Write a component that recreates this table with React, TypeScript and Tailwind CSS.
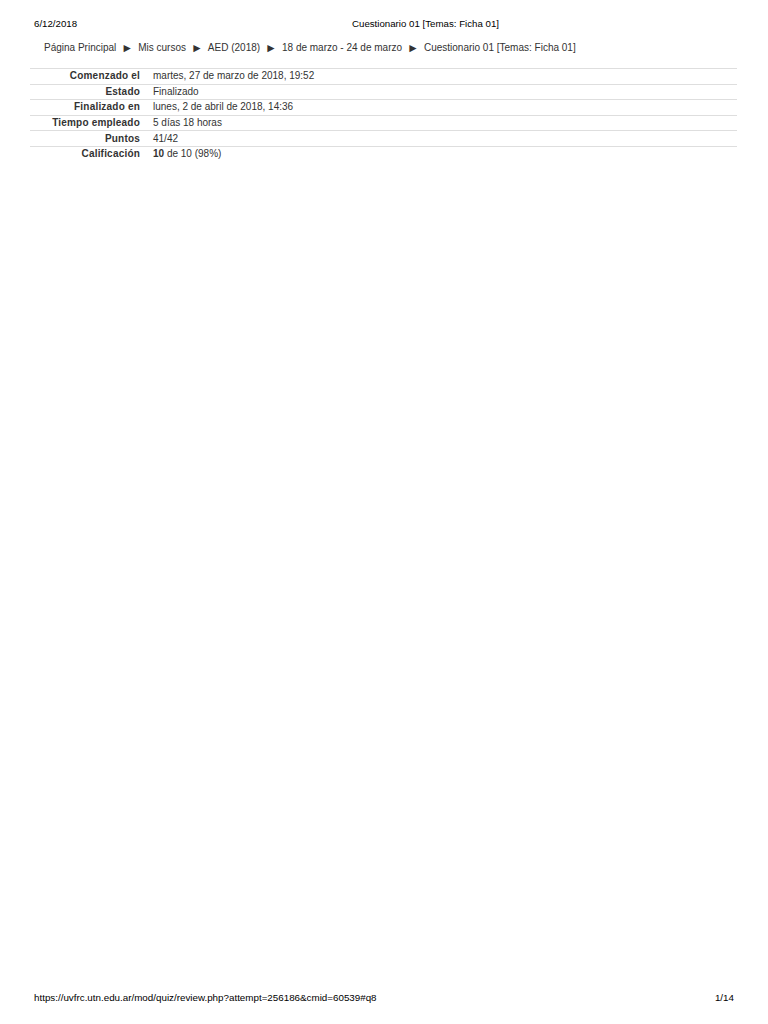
import React from "react";

const rows: { label: string; value: React.ReactNode }[] = [
  { label: "Comenzado el", value: "martes, 27 de marzo de 2018, 19:52" },
  { label: "Estado", value: "Finalizado" },
  { label: "Finalizado en", value: "lunes, 2 de abril de 2018, 14:36" },
  { label: "Tiempo empleado", value: "5 días 18 horas" },
  { label: "Puntos", value: "41/42" },
  {
    label: "Calificación",
    value: (
      <>
        <b className="font-bold">10</b> de 10 (98%)
      </>
    ),
  },
];

const crumbs = [
  "Página Principal",
  "Mis cursos",
  "AED (2018)",
  "18 de marzo - 24 de marzo",
  "Cuestionario 01 [Temas: Ficha 01]",
];

export default function App() {
  return (
    <div
      className="w-[768px] h-[1024px] bg-white flex flex-col text-[#222]"
      style={{ fontFamily: '"Liberation Sans", Arial, sans-serif' }}
    >
      <div className="flex pt-[18px] pl-[34px] text-[9.7px] leading-[12px] text-black">
        <div className="w-[318px]">6/12/2018</div>
        <div>Cuestionario 01 [Temas: Ficha 01]</div>
      </div>
      <div className="flex items-center pl-[44px] mt-[12px] text-[10px] leading-[12px] text-[#333]">
        {crumbs.map((c, i) => (
          <React.Fragment key={c}>
            {i > 0 && (
              <span className="mx-[5px] text-[12px] leading-[12px]">►</span>
            )}
            <span>{c}</span>
          </React.Fragment>
        ))}
      </div>
      <div className="ml-[30px] w-[707px] mt-[14px]">
        {rows.map((r, i) => (
          <div
            key={r.label}
            className={`flex items-center h-[15.6px] text-[10px] leading-[12px] text-[#333] ${
              i < 6 ? "border-t border-[#dedede]" : ""
            }`}
          >
            <div className="w-[110px] text-right font-bold tracking-[0.2px]">{r.label}</div>
            <div className="ml-[13px]">{r.value}</div>
          </div>
        ))}
      </div>
      <div className="mt-auto flex justify-between pl-[34px] pr-[34px] pb-[20px] text-[9.8px] leading-[12px] text-black">
        <div>https://uvfrc.utn.edu.ar/mod/quiz/review.php?attempt=256186&amp;cmid=60539#q8</div>
        <div>1/14</div>
      </div>
    </div>
  );
}
